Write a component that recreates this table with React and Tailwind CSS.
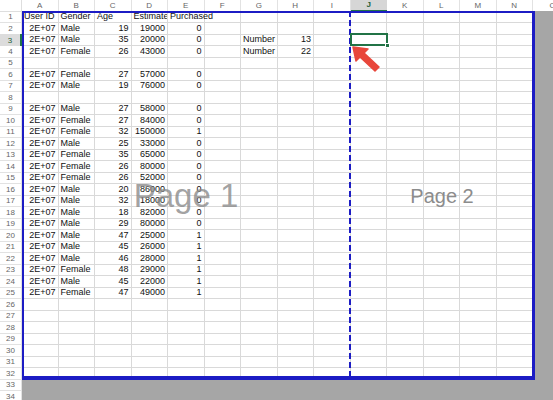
const cols = ['A', 'B', 'C', 'D', 'E', 'F', 'G', 'H', 'I', 'J', 'K', 'L', 'M', 'N', 'O'];

// [userId, gender, age, salary, purchased]
const data = [
  ['2E+07', 'Male', 19, 19000, 0],
  ['2E+07', 'Male', 35, 20000, 0],
  ['2E+07', 'Female', 26, 43000, 0],
  null,
  ['2E+07', 'Female', 27, 57000, 0],
  ['2E+07', 'Male', 19, 76000, 0],
  null,
  ['2E+07', 'Male', 27, 58000, 0],
  ['2E+07', 'Female', 27, 84000, 0],
  ['2E+07', 'Female', 32, 150000, 1],
  ['2E+07', 'Male', 25, 33000, 0],
  ['2E+07', 'Female', 35, 65000, 0],
  ['2E+07', 'Female', 26, 80000, 0],
  ['2E+07', 'Female', 26, 52000, 0],
  ['2E+07', 'Male', 20, 86000, 0],
  ['2E+07', 'Male', 32, 18000, 0],
  ['2E+07', 'Male', 18, 82000, 0],
  ['2E+07', 'Male', 29, 80000, 0],
  ['2E+07', 'Male', 47, 25000, 1],
  ['2E+07', 'Male', 45, 26000, 1],
  ['2E+07', 'Male', 46, 28000, 1],
  ['2E+07', 'Female', 48, 29000, 1],
  ['2E+07', 'Male', 45, 22000, 1],
  ['2E+07', 'Female', 47, 49000, 1],
];

const side = { 3: ['Number', 13], 4: ['Number', 22] };

function cellsFor(row) {
  const out = Array(14).fill(null);
  if (row === 1) {
    out[0] = { t: 'User ID' };
    out[1] = { t: 'Gender' };
    out[2] = { t: 'Age' };
    out[3] = { t: 'Estimated Salary', clip: true };
    out[4] = { t: 'Purchased' };
  } else if (row >= 2 && row <= 25) {
    const d = data[row - 2];
    if (d) {
      out[0] = { t: d[0], r: true };
      out[1] = { t: d[1] };
      out[2] = { t: d[2], r: true };
      out[3] = { t: d[3], r: true };
      out[4] = { t: d[4], r: true };
    }
  }
  if (side[row]) {
    out[6] = { t: side[row][0] };
    out[7] = { t: side[row][1], r: true };
  }
  return out;
}

const gridCols = 'grid grid-cols-[22px_repeat(14,36.5px)_40px]';

function HeaderRow() {
  return (
    <div className={`${gridCols} h-[11px] bg-white text-[8px] leading-[10px] text-[#666]`}>
      <div className="border-r border-b border-[#dedede]" />
      {cols.map((c) => (
        <div
          key={c}
          className={
            c === 'J'
              ? 'flex items-center justify-center bg-[#d6d6d6] border-b-2 border-[#217346] text-[#1e5e38] font-bold'
              : 'flex items-center justify-center border-r border-b border-[#e2e2e2]'
          }
        >
          {c}
        </div>
      ))}
    </div>
  );
}

function SheetRow({ n }) {
  const inPage = n <= 32;
  const cells = cellsFor(n);
  return (
    <div className={`${gridCols} h-[11.5px] text-[9px] leading-[11px] text-[#111]`}>
      <div
        className={
          n === 3
            ? 'flex items-center justify-center bg-[#dcdcdc] border-r-2 border-[#217346] text-[#1e5e38] text-[8px]'
            : 'flex items-center justify-center border-r border-b border-[#e2e2e2] text-[#666] text-[8px]'
        }
      >
        {n}
      </div>
      {cells.map((c, i) =>
        inPage ? (
          <div
            key={i}
            className={`border-r border-b border-[#d9d9d9] whitespace-nowrap px-[2px] ${
              c && c.r ? 'text-right' : 'text-left'
            } ${c && c.clip ? 'overflow-hidden' : 'overflow-visible'}`}
          >
            {c ? c.t : ''}
          </div>
        ) : (
          <div key={i} className="bg-[#a6a6a6]" />
        )
      )}
      <div className="bg-[#a6a6a6]" />
    </div>
  );
}

export default function App() {
  const rows = Array.from({ length: 34 }, (_, i) => i + 1);
  return (
    <div className="relative w-[553px] h-[400px] overflow-hidden bg-white font-['Liberation_Sans',Arial,sans-serif]">
      <HeaderRow />
      {rows.map((n) => (
        <SheetRow key={n} n={n} />
      ))}

      {/* page area outline */}
      <div className="pointer-events-none absolute left-[22px] top-[11px] w-[513px] h-[369px] border-l-2 border-t-2 border-r-[3px] border-b-[4px] border-[#1c1cc4]" />

      {/* page break */}
      <div className="pointer-events-none absolute left-[349px] top-[11px] w-[2px] h-[367px] bg-[repeating-linear-gradient(to_bottom,#1c1cc4_0_6px,transparent_6px_9px)]" />

      {/* watermarks */}
      <div className="pointer-events-none absolute left-[22px] top-[11px] w-[328px] h-[367px] flex items-center justify-center">
        <span className="text-[33px] leading-none text-[#8a8a8a]/80 mt-[2px]">Page 1</span>
      </div>
      <div className="pointer-events-none absolute left-[351px] top-[11px] w-[182px] h-[367px] flex items-center justify-center">
        <span className="text-[20px] leading-none text-[#8c8c8c] mt-[2px]">Page 2</span>
      </div>

      {/* selected cell J3 */}
      <div className="pointer-events-none absolute left-[350px] top-[33px] w-[38px] h-[13px] border-2 border-[#217346]" />
      <div className="pointer-events-none absolute left-[385px] top-[43px] w-[5px] h-[5px] bg-[#217346] border border-white" />

      {/* red arrow */}
      <svg className="pointer-events-none absolute left-[349px] top-[43px]" width="36" height="32" viewBox="0 0 36 32">
        <path d="M4 4 L19 6 L15 10 L30 24 L26 28 L11 14 L7 18 Z" fill="#e8473b" stroke="#e8473b" strokeWidth="1.5" strokeLinejoin="round" />
      </svg>
    </div>
  );
}
